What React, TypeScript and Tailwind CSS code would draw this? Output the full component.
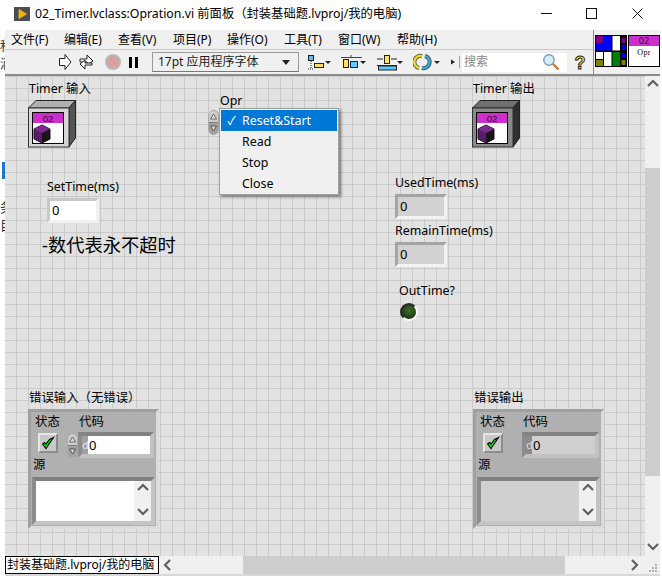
import React from "react";

const FONT = "font-['Noto_Sans','Noto_Sans_CJK_SC',sans-serif]";

function Chevron({ dir, className = "" }: { dir: "up" | "down" | "left" | "right"; className?: string }) {
  const d = {
    up: "M1 7 L6 2 L11 7",
    down: "M1 2 L6 7 L11 2",
    left: "M7 1 L2 6 L7 11",
    right: "M2 1 L7 6 L2 11",
  }[dir];
  return (
    <svg width="12" height="12" viewBox="0 0 12 12" className={className}>
      <path d={d} fill="none" stroke="#606060" strokeWidth="2.2" />
    </svg>
  );
}

function ClusterIcon({ dark }: { dark?: boolean }) {
  return (
    <svg width="48" height="48" viewBox="0 0 48 48" className="block">
      <path d="M0.5 8 L8 0.5 L47.5 0.5 L41 8 Z" fill={dark ? "#707070" : "#b0b0b0"} stroke="#222" />
      <path d="M41 8 L47.5 0.5 L47.5 38 L41 47 Z" fill={dark ? "#303030" : "#555"} stroke="#222" />
      <rect x="0.5" y="8" width="40.5" height="39" fill={dark ? "#8a8a8a" : "#d6d6d6"} stroke="#333" />
      <rect x="4.5" y="12.5" width="31" height="31" fill="#fff" stroke="#000" />
      <rect x="5" y="13" width="30" height="10" fill="#cc2fcc" />
      <text x="20" y="21.5" fontSize="9.5" textAnchor="middle" fill="#300a30" fontFamily="Liberation Sans">02</text>
      <path d="M6 29 L14 25 L22 29 L22 39 L14 43 L6 39 Z" fill="#5a1a6a" stroke="#2a0a30" />
      <path d="M14 33 L22 29 L22 39 L14 43 Z" fill="#151515" />
      <path d="M6 29 L14 25 L22 29 L14 33 Z" fill="#7a2a8a" />
    </svg>
  );
}

function Spinner({ className = "" }: { className?: string }) {
  return (
    <div className={"flex flex-col w-[11px] h-[25px] rounded-full overflow-hidden bg-[#b8b8b8] border border-[#a8a8a8] " + className}>
      <div className="flex-1 flex items-center justify-center bg-[#cccccc] border-b border-[#808080]">
        <svg width="7" height="7" viewBox="0 0 7 7"><path d="M0.5 6 L3.5 1 L6.5 6 Z" fill="#e4e4e4" stroke="#666" /></svg>
      </div>
      <div className="flex-1 flex items-center justify-center bg-[#a0a0a0]">
        <svg width="7" height="7" viewBox="0 0 7 7"><path d="M0.5 1 L3.5 6 L6.5 1 Z" fill="#d8d8d8" stroke="#555" /></svg>
      </div>
    </div>
  );
}

function CheckBox() {
  return (
    <div className="w-[20px] h-[20px] bg-[#c9c9c9] border-2 border-t-[#e6e6e6] border-l-[#e6e6e6] border-r-[#8c8c8c] border-b-[#8c8c8c] flex items-center justify-center">
      <svg width="14" height="14" viewBox="0 0 14 14">
        <path d="M1.5 8 L5 12.5 L12.5 1.5 L8.5 3.5 L5 8 L3.5 6.5 Z" fill="#00e000" stroke="#000" strokeWidth="1.1" />
      </svg>
    </div>
  );
}

function NumericBox({ value, interior, className = "" }: { value: string; interior: string; className?: string }) {
  return (
    <div className={"h-[25px] w-[52px] border-[3px] border-t-[#a4a4a4] border-l-[#a4a4a4] border-r-[#f2f2f2] border-b-[#f2f2f2] " + interior + " text-[13px] leading-[19px] pl-[2px] text-black " + className}>
      {value}
    </div>
  );
}

function ErrorCluster({ output }: { output?: boolean }) {
  const inner = output ? "bg-[#d0d0d0]" : "bg-white";
  return (
    <div className="w-full h-[120px] bg-[#b0b0b0] border-[3px] border-t-[#a0a0a0] border-l-[#a0a0a0] border-r-[#dcdcdc] border-b-[#dcdcdc] text-[12.4px] leading-[18px] text-black flex flex-col">
      <div className={"flex items-start pt-[1px] pl-[2px] " + (output ? "gap-[15px]" : "gap-[19px]")}>
        <div className="flex flex-col items-center w-[29px]">
          <span className="h-[20px]">状态</span>
          <CheckBox />
        </div>
        <div className={"flex flex-col " + (output ? "" : "-ml-[3px]")}>
          <span className="h-[20px] pl-[1px]">代码</span>
          <div className="flex items-center -mt-[1px]">
            {!output && <Spinner className="-ml-[11px]" />}
            <div className={"flex h-[26px] border-[4px] border-t-[#828282] border-l-[#8c8c8c] border-r-[#c2c2c2] border-b-[#c2c2c2] " + (output ? "w-[77px]" : "w-[76px]")}>
              <span className={"w-[6px] text-[11px] leading-[18px] " + (output ? "bg-[#8a8a8a] text-[#dcdcdc]" : "bg-[#a0a0a0] text-[#e6e6e6]")}>d</span>
              <span className={"flex-1 pl-[1px] text-[13px] " + inner}>0</span>
            </div>
          </div>
        </div>
      </div>
      <div className="pl-[1px] h-[21px] -mt-[2px] ml-[1px]">源</div>
      <div className="flex-1 mx-[1px] mb-[1px] border-[4px] border-t-[#808080] border-l-[#8c8c8c] border-r-[#c4c4c4] border-b-[#c4c4c4] flex">
        <div className={"flex-1 " + inner} />
        <div className="w-[17px] bg-[#f0f0f0] flex flex-col items-center justify-between py-[2px]">
          <Chevron dir="up" />
          <Chevron dir="down" />
        </div>
      </div>
    </div>
  );
}

function ToolIcon({ children, w }: { children: React.ReactNode; w: number }) {
  return <svg width={w} height="18" viewBox={"0 0 " + w + " 18"} className="block shrink-0">{children}</svg>;
}

const MENU = [
  ["文件(F)", "w-[53px]"],
  ["编辑(E)", "w-[54px]"],
  ["查看(V)", "w-[55px]"],
  ["项目(P)", "w-[54px]"],
  ["操作(O)", "w-[57px]"],
  ["工具(T)", "w-[54px]"],
  ["窗口(W)", "w-[59px]"],
  ["帮助(H)", "w-[60px]"],
];

export default function App() {
  return (
    <div className={"relative w-[662px] h-[576px] overflow-hidden bg-white flex " + FONT}>
      {/* strip of what lies behind the window, on the left */}
      <div className="w-[5px] h-full bg-white overflow-hidden text-[13px] leading-[18px] text-[#333] flex flex-col items-end pt-[36px]">
        <span className="-mr-[8px]">程</span>
        <span className="-mr-[8px]">滴</span>
        <span className="-mr-[8px]">li</span>
        <span className="-mr-[8px]">2</span>
        <span className="-mr-[8px] mb-[36px]">u</span>
        <div className="w-[3px] h-[17px] bg-[#1e78c8] shrink-0" />
        <span className="-mr-[8px] mt-[1px]">c</span>
        <span className="-mr-[8px]">务</span>
        <span className="-mr-[8px]">目</span>
      </div>

      <div className="w-[655px] h-full flex flex-col">
        {/* title bar */}
        <div className="h-[30px] bg-white flex items-center shrink-0 relative">
          <svg width="16" height="14" viewBox="0 0 16 14" className="ml-[9px] -mt-[2px]">
            <rect width="16" height="14" fill="#4d4d4d" />
            <path d="M5 2.5 L12.5 7 L5 11.5 Z" fill="#f5b000" stroke="#ffd040" strokeWidth="0.6" />
          </svg>
          <span className="ml-[5px] text-[12.3px] text-black whitespace-nowrap -mt-[2px]">02_Timer.lvclass:Opration.vi 前面板（封装基础题.lvproj/我的电脑)</span>
          <div className="ml-auto flex items-center h-full pr-[17px] gap-[28px] -mt-[3px]">
            <svg width="11" height="11" viewBox="0 0 11 11" className="mr-[6px]"><path d="M0 5.5 H11" stroke="#111" strokeWidth="1" /></svg>
            <svg width="11" height="11" viewBox="0 0 11 11"><rect x="0.5" y="0.5" width="10" height="10" fill="none" stroke="#111" /></svg>
            <svg width="11" height="11" viewBox="0 0 11 11" className="ml-[7px]"><path d="M0.5 0.5 L10.5 10.5 M10.5 0.5 L0.5 10.5" stroke="#111" /></svg>
          </div>
        </div>

        {/* menu + toolbar, with the icon pane at the right */}
        <div className="flex h-[46px] shrink-0 bg-[#f0f0f0] border-b-2 border-[#8a8a8a]">
          <div className="flex-1 flex flex-col min-w-0">
            <div className="h-[20px] flex items-center pl-[6px] text-[12px] text-black border-b border-[#c8c8c8]">
              {MENU.map(([t, w]) => (
                <span key={t} className={w + " whitespace-nowrap"}>{t}</span>
              ))}
            </div>
            <div className="flex-1 flex items-center pl-[53px]">
              <ToolIcon w={14}><path d="M1.5 5.5 H7 V1.5 L13 9 L7 16.5 V12.5 H1.5 Z" fill="#fff" stroke="#222" /></ToolIcon>
              <div className="ml-[6px]">
                <ToolIcon w={17}>
                  <path d="M2 6 H9 V2 L15 8 L9 12 V9 H2 Z" fill="#fff" stroke="#222" />
                  <path d="M14 12 H7 V16 L2 11 L7 7 V10 H14 Z" fill="#fff" stroke="#222" />
                </ToolIcon>
              </div>
              <div className="ml-[10px] w-[16px] h-[16px] rounded-full bg-[#d8a0a0] border-2 border-[#b8b8b8]" />
              <div className="ml-[8px] flex gap-[3px] h-[11px]">
                <div className="w-[3px] bg-black" />
                <div className="w-[3px] bg-black" />
              </div>
              <div className="ml-[14px] w-[147px] h-[20px] border border-[#9a9a9a] border-b-[#777] bg-[#f0f0f0] flex items-center pl-[5px] text-[12px] text-[#222] whitespace-nowrap">
                17pt 应用程序字体
                <svg width="8" height="5" viewBox="0 0 8 5" className="ml-auto mr-[8px]"><path d="M0 0 H8 L4 5 Z" fill="#222" /></svg>
              </div>
              <div className="ml-[8px]">
                <ToolIcon w={24}>
                  <rect x="1.5" y="2.5" width="5" height="5" fill="#60b8ff" stroke="#222" />
                  <rect x="7.5" y="10.5" width="9" height="4" fill="#ffe060" stroke="#222" />
                  <path d="M4 8 V16 M1 16 H6" stroke="#222" strokeDasharray="1 1" />
                  <path d="M18 8 H24 L21 11 Z" fill="#222" />
                </ToolIcon>
              </div>
              <div className="ml-[10px]">
                <ToolIcon w={26}>
                  <path d="M0 4.5 H21 M10 4.5 V2" stroke="#444" />
                  <rect x="2.5" y="6.5" width="5" height="8" fill="#ffe060" stroke="#222" />
                  <rect x="9.5" y="8.5" width="7" height="6" fill="#60c8ff" stroke="#222" />
                  <path d="M19 8 H25 L22 11 Z" fill="#222" />
                </ToolIcon>
              </div>
              <div className="ml-[10px]">
                <ToolIcon w={27}>
                  <rect x="7.5" y="2.5" width="5" height="8" fill="#ffe060" stroke="#222" />
                  <path d="M0 6 H6 M14 6 H20 M0 12.5 H20" stroke="#222" />
                  <rect x="1.5" y="13" width="18" height="4" fill="#60c8ff" stroke="#222" />
                  <path d="M20 8 H26 L23 11 Z" fill="#222" />
                </ToolIcon>
              </div>
              <div className="ml-[9px]">
                <ToolIcon w={28}>
                  <path d="M9 3 A6 6 0 0 0 6 15" fill="none" stroke="#444" strokeWidth="4" />
                  <path d="M9 3 A6 6 0 0 0 6 15" fill="none" stroke="#e6d820" strokeWidth="2.6" />
                  <path d="M9 15 A6 6 0 0 0 12 3" fill="none" stroke="#444" strokeWidth="4" />
                  <path d="M9 15 A6 6 0 0 0 12 3" fill="none" stroke="#38a8d8" strokeWidth="2.6" />
                  <path d="M21 8 H27 L24 11 Z" fill="#222" />
                </ToolIcon>
              </div>
              <svg width="10" height="12" viewBox="0 0 10 12" className="ml-[10px]"><path d="M0 3.5 L4 6 L0 8.5 Z" fill="#222" /><path d="M8.5 0 V12" stroke="#a0a0a0" /></svg>
              <div className="ml-[1px] w-[105px] h-[19px] bg-white flex items-center pl-[2px] text-[12px] text-[#8a8a8a]">
                搜索
                <svg width="18" height="18" viewBox="0 0 18 18" className="ml-auto mr-[7px]">
                  <path d="M10.5 10.5 L16.5 16.5" stroke="#c87830" strokeWidth="2.4" />
                  <circle cx="7" cy="7" r="5.2" fill="#d8ecf8" stroke="#7aa0b8" strokeWidth="1.4" />
                </svg>
              </div>
              <svg width="14" height="18" viewBox="0 0 14 18" className="ml-[6px]">
                <text x="7" y="15.5" fontSize="18" fontWeight="700" textAnchor="middle" fill="#f0e020" stroke="#222" strokeWidth="0.9" fontFamily="Liberation Sans">?</text>
              </svg>
            </div>
          </div>
          <div className="w-[67px] border-l border-[#8a8a8a] flex items-start pt-[5px] pl-[1px] gap-[1px] shrink-0">
            <svg width="32" height="32" viewBox="0 0 32 32" className="block">
              <rect width="32" height="32" fill="#000" />
              <rect x="1" y="1" width="7" height="7" fill="#800080" />
              <rect x="1" y="8" width="7" height="7.5" fill="#0000ff" />
              <rect x="1" y="17" width="7" height="7" fill="#fff" />
              <rect x="1" y="25" width="7" height="6" fill="#808000" />
              <rect x="9" y="1" width="7.5" height="14.5" fill="#0000ff" />
              <rect x="9" y="17" width="7.5" height="14" fill="#fff" />
              <rect x="17.5" y="1" width="7.5" height="14.5" fill="#fff" />
              <rect x="17.5" y="17" width="7.5" height="14" fill="#008000" />
              <rect x="26.5" y="3" width="4" height="5" fill="#800080" />
              <rect x="26.5" y="10" width="4" height="5" fill="#0000ff" />
              <rect x="26.5" y="18" width="4" height="5" fill="#0000ff" />
              <rect x="26.5" y="25" width="4" height="5" fill="#808000" />
            </svg>
            <div className="w-[32px] h-[32px] border border-black bg-white flex flex-col items-center text-black">
              <div className="w-full h-[10px] bg-[#cc2fcc] text-[9px] leading-[10px] text-center text-[#300a30]">02</div>
              <div className="text-[8px] leading-[12px] mt-[1px] font-['Liberation_Serif',serif] tracking-[0.3px]">Opr</div>
            </div>
          </div>
        </div>

        {/* canvas + vertical scrollbar */}
        <div className="flex-1 flex min-h-0">
          <div className="relative flex-1 overflow-hidden bg-[#e2e2e2] bg-[linear-gradient(#cacaca_1px,transparent_1px),linear-gradient(90deg,#cacaca_1px,transparent_1px)] bg-[size:12px_12px] bg-[position:11px_0px] text-[12.4px] leading-[16px] text-black">
            <span className="absolute left-[24px] top-[5px] whitespace-nowrap">Timer 输入</span>
            <div className="absolute left-[23px] top-[24px]"><ClusterIcon /></div>

            <span className="absolute left-[468px] top-[5px] whitespace-nowrap">Timer 输出</span>
            <div className="absolute left-[467px] top-[24px]"><ClusterIcon dark /></div>

            <span className="absolute left-[42px] top-[103px] whitespace-nowrap">SetTime(ms)</span>
            <NumericBox value="0" interior="bg-white" className="absolute left-[42px] top-[122px] !border-t-[#c8c8c8] !border-l-[#c8c8c8]" />

            <span className="absolute left-[37px] top-[157px] whitespace-nowrap text-[18.3px] leading-[24px]">-数代表永不超时</span>

            <span className="absolute left-[215px] top-[17px]">Opr</span>
            <Spinner className="absolute left-[203px] top-[34px]" />

            <span className="absolute left-[390px] top-[99px] whitespace-nowrap">UsedTime(ms)</span>
            <NumericBox value="0" interior="bg-[#d2d2d2]" className="absolute left-[390px] top-[118px]" />
            <span className="absolute left-[390px] top-[147px] whitespace-nowrap">RemainTime(ms)</span>
            <NumericBox value="0" interior="bg-[#d2d2d2]" className="absolute left-[390px] top-[166px]" />

            <span className="absolute left-[394px] top-[207px]">OutTime?</span>
            <div className="absolute left-[395px] top-[227px] w-[18px] h-[18px] rounded-full bg-[radial-gradient(circle_at_50%_40%,#3f6f2a,#1a3a12_75%)] border-2 border-r-white border-b-white border-t-[#2a2a2a] border-l-[#2a2a2a]" />

            <span className="absolute left-[24px] top-[314px] whitespace-nowrap">错误输入（无错误）</span>
            <div className="absolute left-[23px] top-[333px] w-[131px]"><ErrorCluster /></div>

            <span className="absolute left-[469px] top-[314px] whitespace-nowrap">错误输出</span>
            <div className="absolute left-[468px] top-[333px] w-[131px]"><ErrorCluster output /></div>

            {/* open ring menu */}
            <div className="absolute left-[214px] top-[32px] w-[120px] h-[87px] bg-[#f0f0f0] border border-[#a0a0a0] p-[1px] shadow-[2px_2px_3px_rgba(0,0,0,0.45)]">
              <div className="h-[21px] bg-[#0078d7] text-white flex items-center">
                <span className="w-[21px] text-center text-[12px]">✓</span>
                <span>Reset&amp;Start</span>
              </div>
              <div className="h-[21px] flex items-center pl-[21px]">Read</div>
              <div className="h-[21px] flex items-center pl-[21px]">Stop</div>
              <div className="h-[21px] flex items-center pl-[21px]">Close</div>
            </div>
          </div>

          <div className="w-[15px] bg-[#f0f0f0] flex flex-col items-center shrink-0">
            <Chevron dir="up" className="mt-[3px] shrink-0" />
            <div className="mt-[77px] w-full h-[308px] bg-[#cdcdcd] shrink-0" />
            <Chevron dir="down" className="mt-auto mb-[2px] shrink-0" />
          </div>
        </div>

        {/* bottom bar */}
        <div className="h-[18px] bg-[#f0f0f0] flex items-center shrink-0 relative">
          <div className="w-[154px] h-[18px] bg-white border border-black text-[12px] leading-[16px] pl-[1px] whitespace-nowrap overflow-hidden text-black">封装基础题.lvproj/我的电脑</div>
          <Chevron dir="left" className="ml-[4px]" />
          <div className="ml-[68px] w-[322px] h-full bg-[#cdcdcd]" />
          <Chevron dir="right" className="ml-[65px]" />
          <svg width="10" height="10" viewBox="0 0 10 10" className="ml-auto mr-[2px] mt-[6px]">
            <path d="M7 1 h2 v2 h-2 Z M4 4 h2 v2 h-2 Z M7 4 h2 v2 h-2 Z M1 7 h2 v2 h-2 Z M4 7 h2 v2 h-2 Z M7 7 h2 v2 h-2 Z" fill="#b0b0b0" />
          </svg>
        </div>
        <div className="h-[2px] bg-[#d8d8d8] shrink-0" />
      </div>
      <div className="w-[2px] h-full bg-white" />
    </div>
  );
}
